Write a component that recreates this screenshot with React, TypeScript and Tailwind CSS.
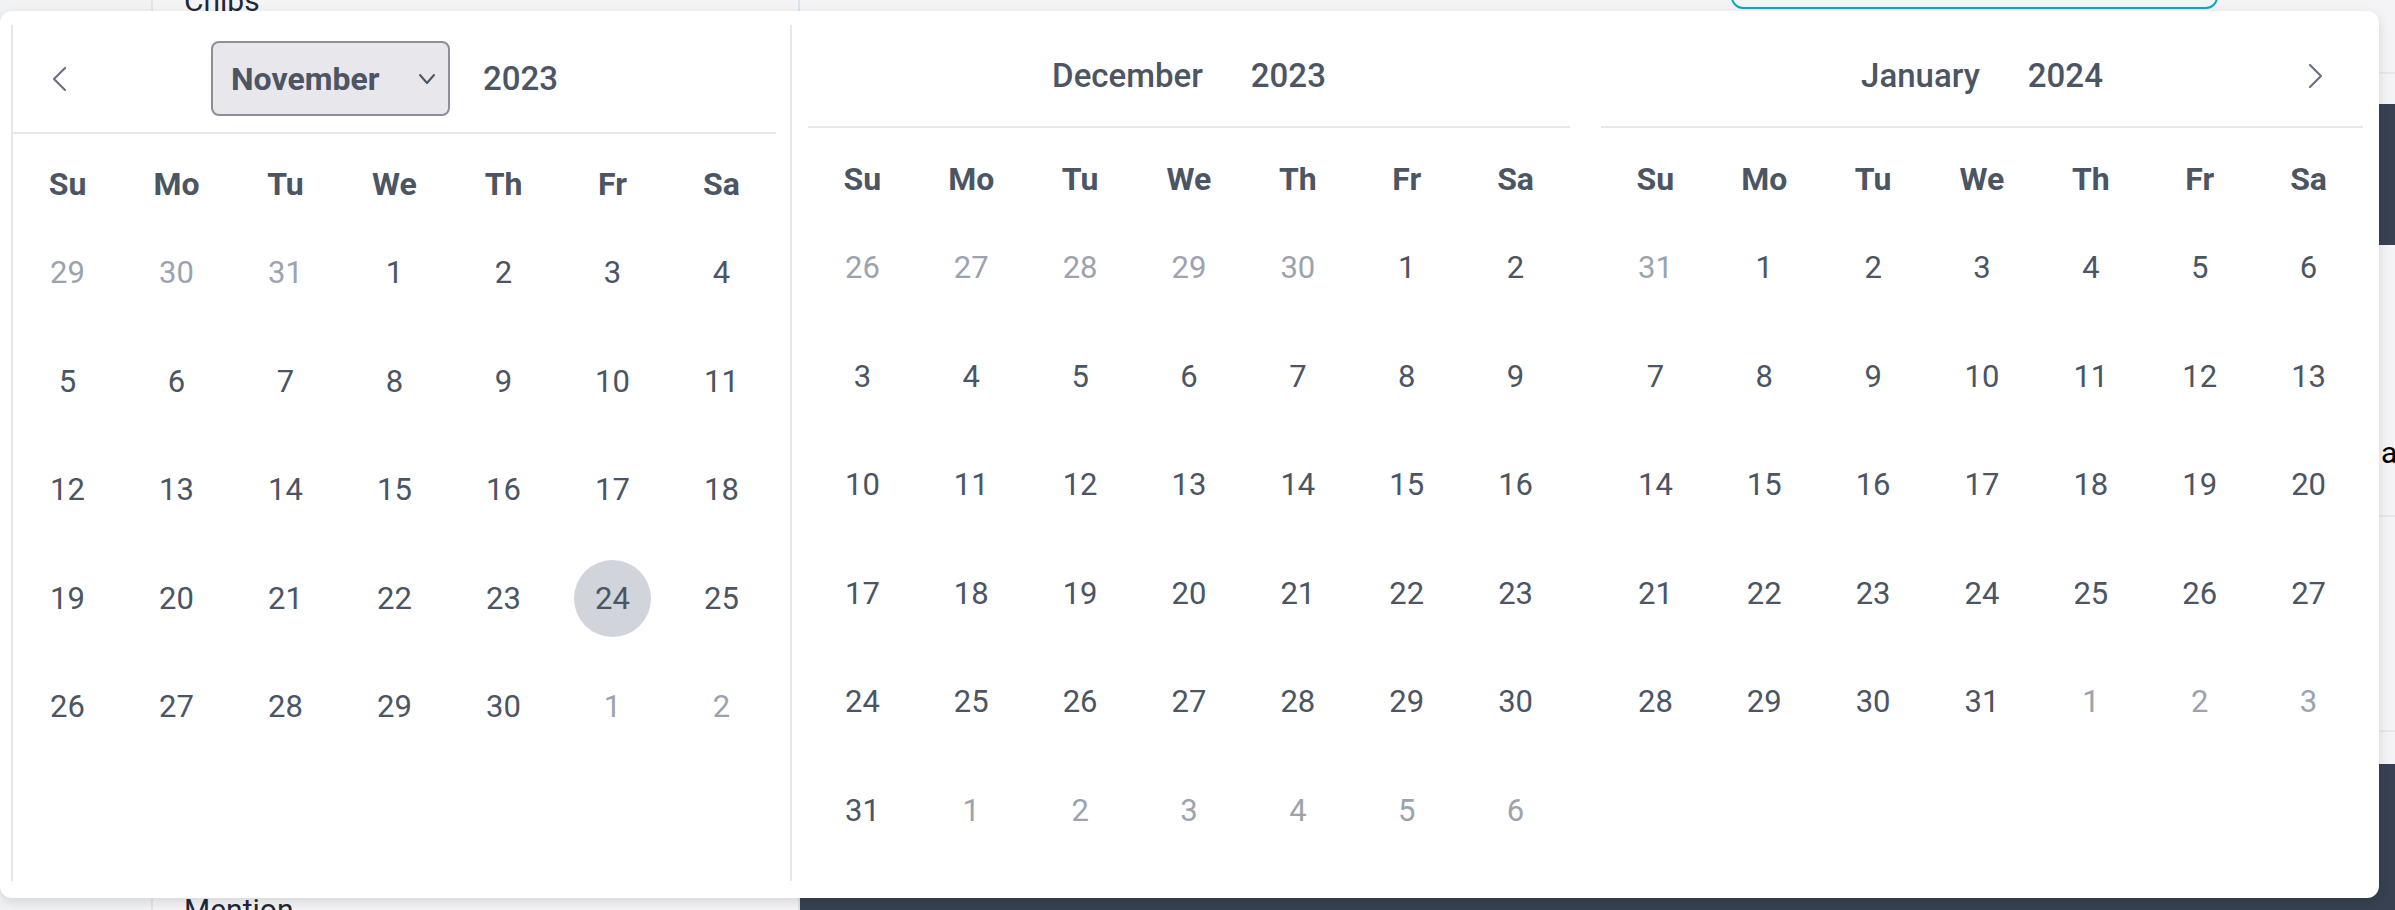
import React from 'react'

const weekdays = ['Su', 'Mo', 'Tu', 'We', 'Th', 'Fr', 'Sa']
const monthNames = [
  'January', 'February', 'March', 'April', 'May', 'June',
  'July', 'August', 'September', 'October', 'November', 'December',
]

type Day = { n: number; outside: boolean }

// builds the weeks shown for a month, with the trailing/leading days of the neighbours
function buildWeeks(year: number, month: number): Day[][] {
  const first = new Date(year, month, 1).getDay()
  const daysIn = new Date(year, month + 1, 0).getDate()
  const prevDays = new Date(year, month, 0).getDate()
  const cells: Day[] = []
  for (let i = first - 1; i >= 0; i--) cells.push({ n: prevDays - i, outside: true })
  for (let d = 1; d <= daysIn; d++) cells.push({ n: d, outside: false })
  let next = 1
  while (cells.length % 7 !== 0) cells.push({ n: next++, outside: true })
  const weeks: Day[][] = []
  for (let i = 0; i < cells.length; i += 7) weeks.push(cells.slice(i, i + 7))
  return weeks
}

function ChevronLeft() {
  return (
    <svg width="16" height="26" viewBox="0 0 16 26" fill="none">
      <polyline points="14,2 3,13 14,24" stroke="#6b7280" strokeWidth="2.2" strokeLinecap="round" strokeLinejoin="round" />
    </svg>
  )
}

function ChevronRight() {
  return (
    <svg width="16" height="26" viewBox="0 0 16 26" fill="none">
      <polyline points="2,2 13,13 2,24" stroke="#6b7280" strokeWidth="2.2" strokeLinecap="round" strokeLinejoin="round" />
    </svg>
  )
}

function MonthGrid({ year, month, selected }: { year: number; month: number; selected?: number }) {
  const weeks = buildWeeks(year, month)
  return (
    <div>
      <div className="grid grid-cols-7 h-[70px] items-center">
        {weekdays.map((w) => (
          <div key={w} className="flex justify-center text-[32px] font-bold text-[#4b5563]">
            {w}
          </div>
        ))}
      </div>
      {weeks.map((week, i) => (
        <div key={i} className="grid grid-cols-7 h-[108.5px] items-center">
          {week.map((d, j) => (
            <div key={j} className="flex justify-center">
              <span
                className={
                  'flex items-center justify-center w-[77px] h-[77px] rounded-full text-[31px] ' +
                  (d.outside ? 'text-[#9ca3af]' : 'text-[#4b5563]') +
                  (!d.outside && d.n === selected ? ' bg-[#d1d5db]' : '')
                }
              >
                {d.n}
              </span>
            </div>
          ))}
        </div>
      ))}
    </div>
  )
}

function Popup() {
  return (
    <div className="absolute left-0 top-[11px] w-[2379px] h-[887px] bg-white rounded-xl shadow-[0_4px_12px_rgba(0,0,0,0.12)] flex pl-[11px] pr-[16px] pt-[14px] pb-[17px] font-[Roboto,'Liberation_Sans',sans-serif]">
      {/* first month, with dropdown */}
      <div className="border-x-2 border-[#e5e7eb] pr-[14px]">
        <div className="w-[763px]">
          <div className="h-[109px] border-b-2 border-[#e5e7eb] flex items-center pl-[38px]">
            <ChevronLeft />
            <div className="ml-[144px] w-[239px] h-[75px] rounded-lg border-2 border-[#8f8d98] bg-[#e8e7ec] flex items-center justify-between pl-[18px] pr-[11px]">
              <span className="text-[32px] font-bold text-[#4b5563]">November</span>
              <svg width="20" height="12" viewBox="0 0 20 12" fill="none">
                <polyline points="3,2 10,10 17,2" stroke="#4b5563" strokeWidth="2" strokeLinecap="round" strokeLinejoin="round" />
              </svg>
            </div>
            <span className="ml-[33px] text-[33px] font-medium text-[#4b5563]">2023</span>
          </div>
          <div className="mt-[15px]">
            <MonthGrid year={2023} month={10} selected={24} />
          </div>
        </div>
      </div>

      {/* second month */}
      <div className="ml-[16px] w-[762px]">
        <div className="h-[103px] border-b-2 border-[#e5e7eb] flex items-center justify-center gap-[48px] text-[33px] font-medium text-[#4b5563]">
          <span>{monthNames[11]}</span>
          <span>2023</span>
        </div>
        <div className="mt-[16px]">
          <MonthGrid year={2023} month={11} />
        </div>
      </div>

      {/* third month */}
      <div className="ml-[31px] w-[762px]">
        <div className="h-[103px] border-b-2 border-[#e5e7eb] grid grid-cols-[1fr_auto_1fr] items-center text-[33px] font-medium text-[#4b5563]">
          <div />
          <div className="flex gap-[48px]">
            <span>{monthNames[0]}</span>
            <span>2024</span>
          </div>
          <div className="flex justify-end pr-[39px]">
            <ChevronRight />
          </div>
        </div>
        <div className="mt-[16px]">
          <MonthGrid year={2024} month={0} />
        </div>
      </div>
    </div>
  )
}

export default function App() {
  return (
    <div className="relative w-[2395px] h-[910px] overflow-hidden bg-[#f4f4f6] font-[Roboto,'Liberation_Sans',sans-serif]">
      {/* page behind the picker */}
      <div className="flex h-full">
        <aside className="w-[153px] shrink-0 h-full border-r-2 border-[#e2e4e8] bg-[#f1f2f4]" />
        <div className="w-[647px] shrink-0 h-full flex flex-col justify-between pl-[31px] border-r-2 border-[#dde3ea]">
          <div className="-mt-[22px] text-[30px] text-[#1f2937]">Chips</div>
          <div className="-mb-[22px] text-[30px] text-[#1f2937]">Mention</div>
        </div>
        <div className="flex-1 min-w-0 h-full flex flex-col">
          <div className="h-[74px] border-b-2 border-[#e5e7eb] pl-[931px]">
            <div className="-mt-[40px] w-[487px] h-[49px] rounded-xl border-2 border-[#00acc1]" />
          </div>
          <div className="h-[30px]" />
          <div className="h-[141px] bg-[#374151]" />
          <div className="h-[272px] border-b-2 border-[#e5e7eb] pl-[1581px] pt-[188px] text-[30px] leading-[40px] text-black">
            a
          </div>
          <div className="h-[215px] border-b-2 border-[#e5e7eb]" />
          <div className="h-[32px]" />
          <div className="flex-1 bg-[#374151] rounded-tl-[28px]" />
        </div>
      </div>

      <Popup />
    </div>
  )
}
